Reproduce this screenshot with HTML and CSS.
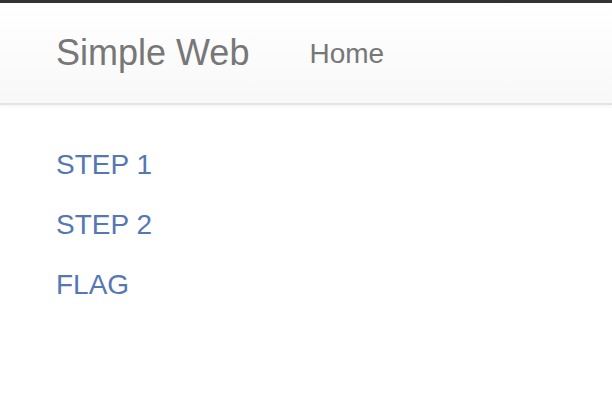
FILE: index.html
```html
<!DOCTYPE html>
<html>
<head>
<meta charset="utf-8">
<link rel="stylesheet" href="styles.css">
</head>
<body>
<nav class="navbar">
  <div class="container nav-inner">
    <a class="brand" href="#">Simple Web</a>
    <ul class="nav">
      <li><a href="#">Home</a></li>
    </ul>
  </div>
</nav>
<main class="container content">
  <p><a href="#">STEP 1</a></p>
  <p><a href="#">STEP 2</a></p>
  <p><a href="#">FLAG</a></p>
</main>
</body>
</html>
```
FILE: styles.css
```css
html, body {
  margin: 0;
  padding: 0;
}
body {
  font-family: "Liberation Sans", Arial, sans-serif;
  background: #fff;
  border-top: 3px solid #333;
}
a {
  text-decoration: none;
}
.container {
  padding: 0 56px;
}
.navbar {
  height: 100px;
  background: linear-gradient(to bottom, #ffffff 0%, #f8f8f8 100%);
  border-bottom: 2px solid #e4e4e4;
  box-shadow: 0 1px 4px rgba(0,0,0,0.06);
}
.nav-inner {
  display: flex;
  align-items: center;
  height: 100px;
}
.brand {
  color: #777;
  font-size: 36px;
}
.nav {
  list-style: none;
  margin: 2px 0 0 60px;
  padding: 0;
  display: flex;
}
.nav a {
  color: #777;
  font-size: 28px;
}
.content {
  padding-top: 40px;
}
.content p {
  margin: 0 0 20px;
  font-size: 28px;
  line-height: 40px;
}
.content a {
  color: #5577b4;
}
```
